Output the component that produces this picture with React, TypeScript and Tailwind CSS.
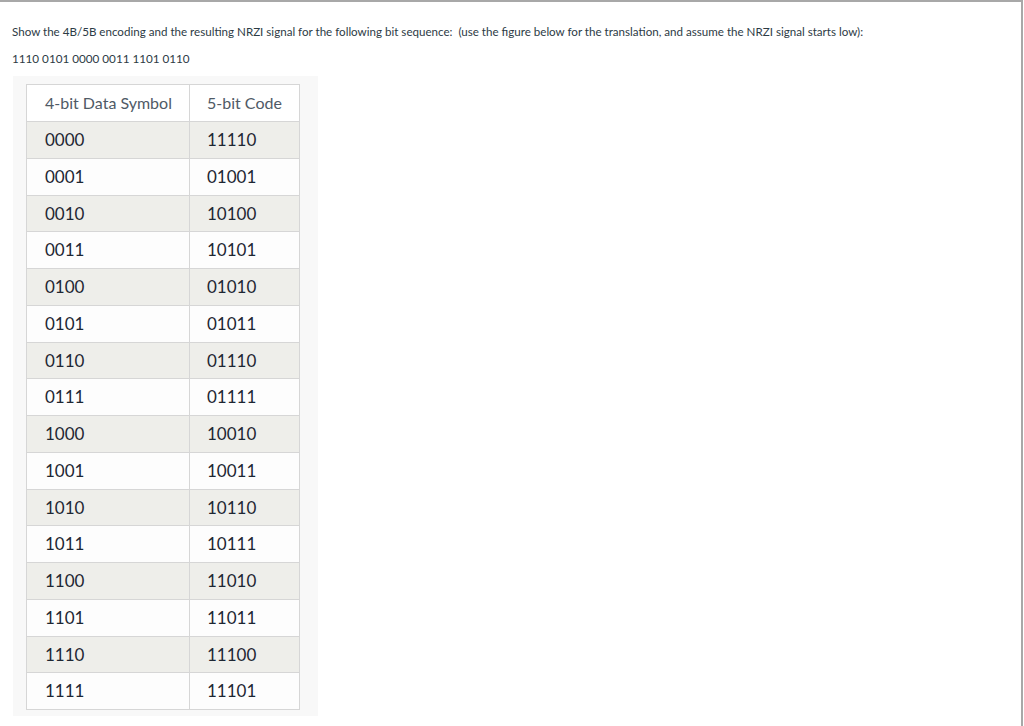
import React from "react";

const rows: [string, string][] = [
  ["0000", "11110"],
  ["0001", "01001"],
  ["0010", "10100"],
  ["0011", "10101"],
  ["0100", "01010"],
  ["0101", "01011"],
  ["0110", "01110"],
  ["0111", "01111"],
  ["1000", "10010"],
  ["1001", "10011"],
  ["1010", "10110"],
  ["1011", "10111"],
  ["1100", "11010"],
  ["1101", "11011"],
  ["1110", "11100"],
  ["1111", "11101"],
];

export default function App() {
  return (
    <div className="w-[1023px] h-[726px] border-t-2 border-r-2 border-[#a8a8a8] bg-white overflow-hidden box-border" style={{ fontFamily: "Lato, 'Open Sans', sans-serif" }}>
      <div className="pl-[12px] pt-[22px] text-[11.6px] leading-[16px] text-[#2d3b45] whitespace-nowrap">
        Show the 4B/5B encoding and the resulting NRZI signal for the following bit sequence:&nbsp; (use the figure below for the translation, and assume the NRZI signal starts low):
      </div>
      <div className="pl-[12px] pt-[10px] text-[11.7px] leading-[16px] text-[#2d3b45]">
        1110 0101 0000 0011 1101 0110
      </div>
      <div className="ml-[13px] mt-[10px] w-[305px] bg-[#f8f8f8] pl-[13px] pt-[8px] pb-[6px]">
        <table className="border-collapse w-[273px] table-fixed">
          <colgroup>
            <col className="w-[163px]" />
            <col className="w-[110px]" />
          </colgroup>
          <thead>
            <tr className="h-[37px] bg-white">
              <th className="border border-[#d6d6d6] text-left font-normal pl-[18px] text-[16px] text-[#4f5a66]">4-bit Data Symbol</th>
              <th className="border border-[#d6d6d6] text-left font-normal pl-[17px] text-[16px] text-[#4f5a66]">5-bit Code</th>
            </tr>
          </thead>
          <tbody>
            {rows.map(([a, b], i) => (
              <tr key={a} className={`h-[36.75px] ${i % 2 === 0 ? "bg-[#eeeeea]" : "bg-[#fdfdfd]"}`}>
                <td className="border border-[#d6d6d6] pl-[18px] text-[17px] text-[#1e2733]">{a}</td>
                <td className="border border-[#d6d6d6] pl-[17px] text-[17px] text-[#1e2733]">{b}</td>
              </tr>
            ))}
          </tbody>
        </table>
      </div>
    </div>
  );
}
